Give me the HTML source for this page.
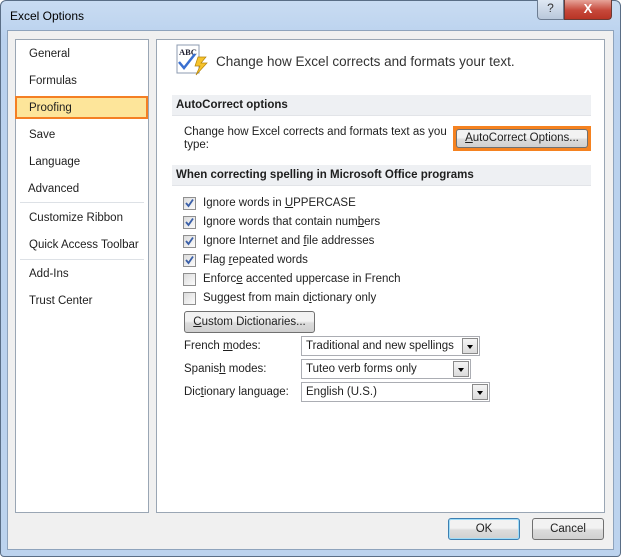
<!DOCTYPE html>
<html><head><style>
*{margin:0;padding:0;box-sizing:border-box}
body{width:623px;height:559px;background:#fff;font-family:"Liberation Sans",sans-serif;font-size:11.5px;line-height:17px;color:#1e1e1e;position:relative;overflow:hidden}
.a{position:absolute}
.win{left:0;top:0;width:621px;height:557px;border:1px solid #5a6e86;border-radius:6px 6px 4px 4px;background:linear-gradient(#c9dcf2,#b9d1ee 40px,#bcd3ee);}
.inner{left:7px;top:30px;width:607px;height:520px;background:#f0f0f0;border:1px solid #8ea3bc}
.panel{background:#fff;border:1px solid #9aa6b4}
.nav{left:29px}
.sep{left:20px;width:124px;height:1px;background:#dde1e6}
.hdr{left:172px;width:419px;height:21px;background:#eef0f3;border-bottom:1px solid #e2e4e8;font-weight:bold;padding:2px 0 0 4px}
.cb{left:183px;width:13px;height:13px;border:1px solid #8f8f8f;background:linear-gradient(135deg,#dcdcdc,#fbfbfb)}
.cb svg{position:absolute;left:0px;top:0px}
.lbl{left:203px}
.btn{border:1px solid #707070;border-radius:3px;background:linear-gradient(#f2f2f2 45%,#dcdcdc 55%,#d0d0d0);text-align:center}
.dd{left:301px;height:20px;border:1px solid #abadb3;background:#fff;padding:0 4px;line-height:19px}
.dd .ar{position:absolute;right:1px;top:1px;width:16px;height:16px;border:1px solid #8a8a8a;background:linear-gradient(#f4f4f4,#dcdcdc)}
.dd .ar:after{content:"";position:absolute;left:4px;top:6px;border:3.5px solid transparent;border-top:4px solid #000}
u{text-decoration:underline}
</style></head><body>
<div class="a win"></div>
<div class="a" style="left:10px;top:8px;font-size:12px;color:#000">Excel Options</div>
<div class="a" style="left:537px;top:0;width:27px;height:20px;border:1px solid #6d7d92;border-top:none;border-radius:0 0 0 4px;background:linear-gradient(#dfe8f3,#b9c8db);text-align:center;font-size:12px;color:#333">?</div>
<div class="a" style="left:564px;top:0;width:48px;height:20px;border:1px solid #6b3a34;border-top:none;border-radius:0 0 4px 0;background:linear-gradient(#e6a49a,#c6483a 55%,#b83425);text-align:center;color:#fff;font-weight:bold;font-size:13px;line-height:18px">X</div>
<div class="a inner"></div>
<div class="a panel" style="left:15px;top:39px;width:134px;height:474px"></div>
<div class="a panel" style="left:156px;top:39px;width:449px;height:474px"></div>
<div class="a nav" style="top:46px">General</div>
<div class="a nav" style="top:73px">Formulas</div>
<div class="a" style="left:15px;top:96px;width:133px;height:23px;background:#fde59a;border:2px solid #f47f24"></div>
<div class="a nav" style="top:100px">Proofing</div>
<div class="a nav" style="top:127px">Save</div>
<div class="a nav" style="top:154px">Language</div>
<div class="a" style="left:28px;top:181px">Advanced</div>
<div class="a sep" style="top:202px"></div>
<div class="a nav" style="top:210px">Customize Ribbon</div>
<div class="a nav" style="top:237px">Quick Access Toolbar</div>
<div class="a sep" style="top:259px"></div>
<div class="a nav" style="top:266px">Add-Ins</div>
<div class="a nav" style="top:293px">Trust Center</div>

<svg class="a" style="left:176px;top:44px" width="36" height="32" viewBox="0 0 36 32">
<rect x="1" y="1" width="22" height="28" fill="#fff" stroke="#8c9bb0"/>
<text x="3" y="11" font-size="8.5" font-family="Liberation Serif" font-weight="bold" fill="#223">ABC</text>
<path d="M3 18 L8 24 L19 10" stroke="#3a6fd0" stroke-width="2.5" fill="none"/>
<path d="M22 13 L30 13 L25 19 L31 19 L20 31 L24 22 L19 22 Z" fill="#f6c32c" stroke="#b58308" stroke-width=".7"/>
</svg>
<div class="a" style="left:216px;top:53px;font-size:13.5px;line-height:18px;color:#333">Change how Excel corrects and formats your text.</div>

<div class="a hdr" style="top:95px">AutoCorrect options</div>
<div class="a" style="left:184px;top:126px;line-height:13px">Change how Excel corrects and formats text as you<br>type:</div>
<div class="a" style="left:453px;top:126px;width:138px;height:25px;background:#f58220"></div>
<div class="a btn" style="left:456px;top:129px;width:132px;height:19px;line-height:17px"><u>A</u>utoCorrect Options...</div>

<div class="a hdr" style="top:165px">When correcting spelling in Microsoft Office programs</div>

<div class="a cb" style="top:197px"><svg width="11" height="11"><path d="M2 5 L4.5 8 L9 1.5" stroke="#3a5fa8" stroke-width="1.8" fill="none"/></svg></div>
<div class="a lbl" style="top:195px">Ignore words in <u>U</u>PPERCASE</div>
<div class="a cb" style="top:216px"><svg width="11" height="11"><path d="M2 5 L4.5 8 L9 1.5" stroke="#3a5fa8" stroke-width="1.8" fill="none"/></svg></div>
<div class="a lbl" style="top:214px">Ignore words that contain num<u>b</u>ers</div>
<div class="a cb" style="top:235px"><svg width="11" height="11"><path d="M2 5 L4.5 8 L9 1.5" stroke="#3a5fa8" stroke-width="1.8" fill="none"/></svg></div>
<div class="a lbl" style="top:233px">Ignore Internet and <u>f</u>ile addresses</div>
<div class="a cb" style="top:254px"><svg width="11" height="11"><path d="M2 5 L4.5 8 L9 1.5" stroke="#3a5fa8" stroke-width="1.8" fill="none"/></svg></div>
<div class="a lbl" style="top:252px">Flag <u>r</u>epeated words</div>
<div class="a cb" style="top:273px"></div>
<div class="a lbl" style="top:271px">Enforc<u>e</u> accented uppercase in French</div>
<div class="a cb" style="top:292px"></div>
<div class="a lbl" style="top:290px">Suggest from main d<u>i</u>ctionary only</div>

<div class="a btn" style="left:184px;top:311px;width:131px;height:22px;line-height:21px"><u>C</u>ustom Dictionaries...</div>

<div class="a" style="left:184px;top:338px">French <u>m</u>odes:</div>
<div class="a dd" style="top:336px;width:179px">Traditional and new spellings<div class="ar"></div></div>
<div class="a" style="left:184px;top:361px">Spanis<u>h</u> modes:</div>
<div class="a dd" style="top:359px;width:170px">Tuteo verb forms only<div class="ar"></div></div>
<div class="a" style="left:184px;top:384px">Dic<u>t</u>ionary language:</div>
<div class="a dd" style="top:382px;width:189px">English (U.S.)<div class="ar"></div></div>

<div class="a btn" style="left:448px;top:518px;width:72px;height:22px;line-height:21px;border-color:#3c7fb1;box-shadow:inset 0 0 0 1px #9fdcf8">OK</div>
<div class="a btn" style="left:532px;top:518px;width:72px;height:22px;line-height:21px">Cancel</div>
</body></html>
